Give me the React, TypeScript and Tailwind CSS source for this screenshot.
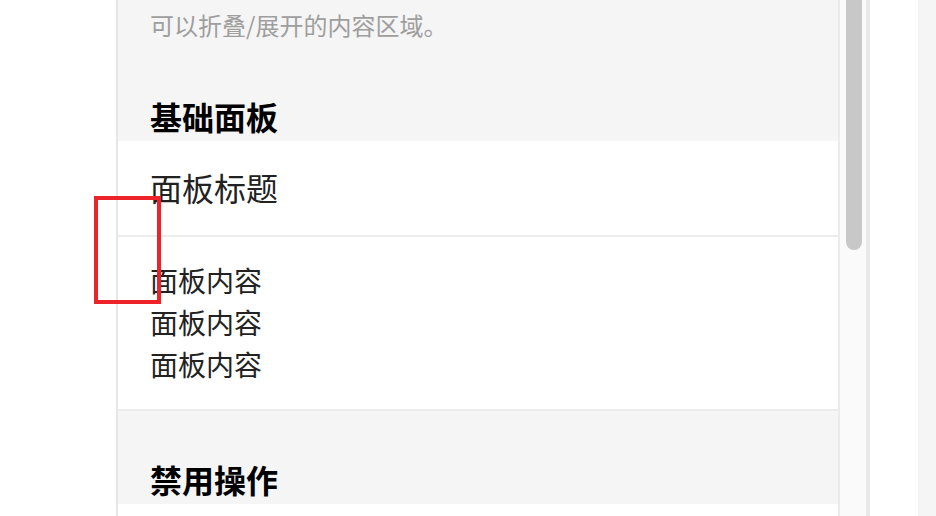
const cjk = { fontFamily: '"Noto Sans CJK SC", "Noto Sans", sans-serif' };

function PanelBody() {
  const lines = ["面板内容", "面板内容", "面板内容"];
  return (
    <div className="px-[32px] pt-[22px] pb-[24px]">
      {lines.map((t, i) => (
        <p key={i} className="text-[28px] leading-[42px] text-[#222]">
          {t}
        </p>
      ))}
    </div>
  );
}

export default function App() {
  return (
    <div className="relative flex h-[516px] w-[936px] overflow-hidden bg-white" style={cjk}>
      <div className="w-[116px] shrink-0 bg-white" />
      <div className="w-[2px] shrink-0 bg-[#e6e6e6]" />

      {/* demo page content */}
      <div className="flex w-[720px] shrink-0 flex-col bg-[#f5f5f5]">
        <p className="px-[32px] pt-[7px] pb-[1px] text-[24px] leading-[36px] text-[#9e9e9e]">
          可以折叠/展开的内容区域。
        </p>

        <h2 className="mt-[49px] px-[32px] pb-[2px] text-[32px] font-bold leading-[46px] text-black">
          基础面板
        </h2>
        <div className="bg-white">
          <div className="flex h-[94px] items-center px-[32px] pb-[2px] text-[32px] text-[#222]">
            面板标题
          </div>
          <div className="h-[2px] bg-[#ececec]" />
          <PanelBody />
          <div className="h-[2px] bg-[#ececec]" />
        </div>

        <h2 className="mt-[45px] px-[32px] pb-[2px] text-[32px] font-bold leading-[46px] text-black">
          禁用操作
        </h2>
        <div className="h-[60px] bg-white" />
      </div>

      <div className="w-[2px] shrink-0 bg-[#ebebeb]" />
      {/* scrollbar */}
      <div className="w-[26px] shrink-0 bg-[#fafafa] px-[6px]">
        <div className="h-[250px] w-[16px] rounded-b-full bg-[#c8c8c8]" />
      </div>
      <div className="w-[4px] shrink-0 bg-[#e8e8e8]" />
      <div className="w-[48px] shrink-0 bg-white" />
      <div className="flex-1 bg-[#f5f5f5]" />

      {/* annotation box */}
      <div className="absolute left-[94px] top-[196px] h-[108px] w-[67px] border-[4px] border-[#ee2229]" />
    </div>
  );
}
